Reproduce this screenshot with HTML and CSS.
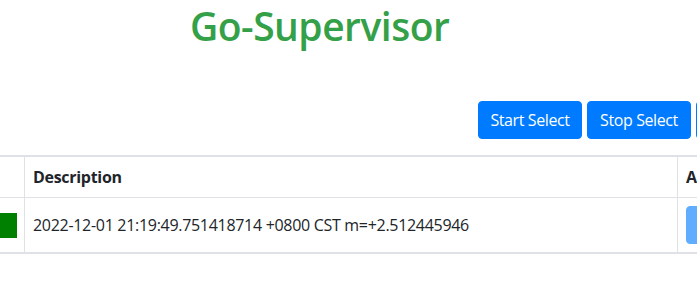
FILE: index.html
```html
<!DOCTYPE html>
<html>
<head>
<meta charset="utf-8">
<link rel="stylesheet" href="styles.css">
</head>
<body>
<div class="page">
  <h1 class="title">Go-Supervisor</h1>
  <div class="toolbar">
    <button class="btn btn-primary">Start Select</button>
    <button class="btn btn-primary">Stop Select</button>
    <button class="btn btn-primary">Refresh</button>
  </div>
  <div class="table-wrap">
    <table class="table">
      <colgroup>
        <col class="c-state">
        <col class="c-desc">
        <col class="c-action">
      </colgroup>
      <thead>
        <tr>
          <th></th>
          <th>Description</th>
          <th>Action</th>
        </tr>
      </thead>
      <tbody>
        <tr>
          <td><span class="state-box"></span></td>
          <td class="desc">2022-12-01 21:19:49.751418714 +0800 CST m=+2.512445946</td>
          <td><button class="btn btn-primary btn-disabled">Start</button></td>
        </tr>
      </tbody>
    </table>
  </div>
</div>
</body>
</html>
```

FILE: styles.css
```css
html, body {
  margin: 0;
  padding: 0;
  background: #fff;
  overflow: hidden;
}
body {
  font-family: "Open Sans", "Noto Sans", sans-serif;
  font-size: 16px;
  line-height: 1.5;
  color: #212529;
}
.page {
  width: 697px;
  height: 297px;
  overflow: hidden;
}
.title {
  margin: 0;
  padding: 0 0 0 190px;
  font-size: 39px;
  line-height: 52px;
  font-weight: 600;
  letter-spacing: -0.5px;
  color: #34a048;
  white-space: nowrap;
}
.toolbar {
  display: flex;
  gap: 5px;
  padding-left: 478px;
  margin-top: 49px;
  white-space: nowrap;
}
.btn {
  flex: none;
  font-family: inherit;
  font-size: 16px;
  line-height: 24px;
  padding: 6px 12px;
  border: 1px solid transparent;
  border-radius: 4px;
  letter-spacing: -0.4px;
  cursor: pointer;
}
.btn-primary {
  background: #007bff;
  border-color: #007bff;
  color: #fff;
}
.toolbar .btn {
  width: 104px;
  padding: 6px 0;
}
.btn-disabled {
  opacity: 0.62;
}
.table-wrap {
  margin-top: 16px;
  width: 697px;
  overflow: hidden;
}
.table {
  border-collapse: collapse;
  table-layout: fixed;
  margin-left: -17px;
  width: 780px;
}
.c-state { width: 41px; }
.c-desc { width: 653px; }
.c-action { width: 86px; }
.table th, .table td {
  padding: 8px;
  text-align: left;
  vertical-align: middle;
  border-left: 1px solid #dee2e6;
  border-right: 1px solid #dee2e6;
  white-space: nowrap;
  overflow: hidden;
}
.table thead th {
  border-top: 2px solid #dee2e6;
  border-bottom: 1px solid #dee2e6;
  font-weight: 700;
  line-height: 24px;
  letter-spacing: -0.3px;
}
.table tbody td {
  border-bottom: 2px solid #dee2e6;
}
.desc {
  letter-spacing: -0.3px;
}
.state-box {
  display: block;
  width: 25px;
  height: 25px;
  background: #008000;
}
```
